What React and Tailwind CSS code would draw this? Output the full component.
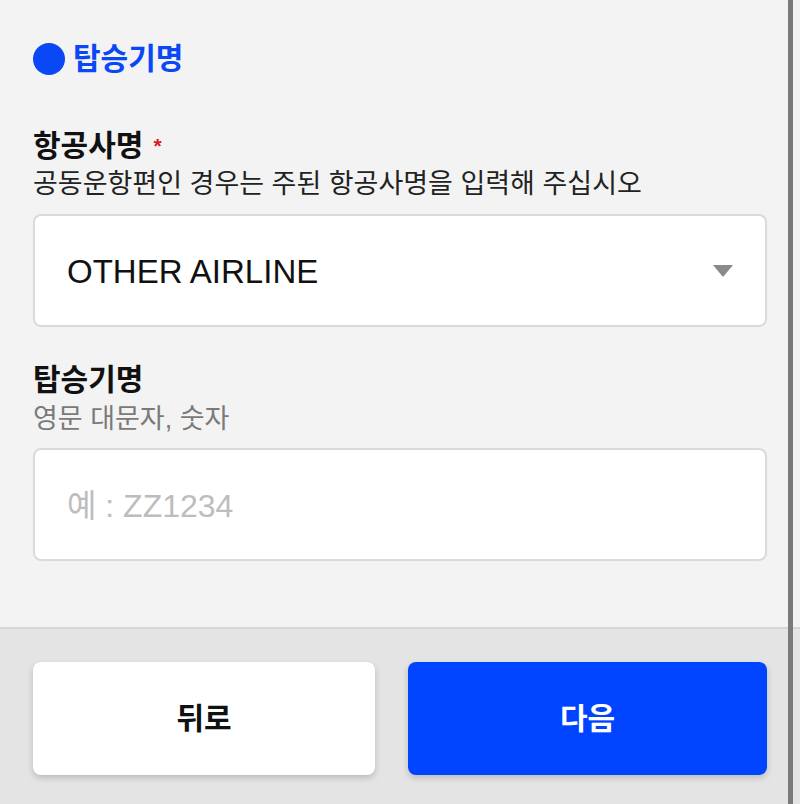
import React from "react";

const font = { fontFamily: '"Liberation Sans", "Noto Sans CJK KR", sans-serif' };

const FlightNameForm = () => {
  return (
    <div className="relative w-[800px] h-[804px] bg-[#f3f3f3] overflow-hidden flex flex-col" style={font}>
      {/* form area */}
      <div className="flex-1 pl-[33px] pr-[33px] pt-[43px]">
        <div className="flex items-center h-[32px]">
          <span className="w-[32px] h-[32px] rounded-full bg-[#0a47f5]" />
          <h1 className="ml-[8px] text-[30px] leading-[32px] font-bold text-[#0a47f5]">탑승기명</h1>
        </div>

        <div className="mt-[53px]">
          <div className="flex items-center h-[36px]">
            <span className="text-[30px] leading-[36px] font-bold text-[#111]">항공사명</span>
            <span className="ml-[10px] text-[21px] leading-[36px] font-bold text-[#d81b1b]">*</span>
          </div>
          <p className="mt-[4px] text-[27px] leading-[32px] text-[#222]">공동운항편인 경우는 주된 항공사명을 입력해 주십시오</p>
          <div className="mt-[14px] h-[113px] w-[734px] rounded-[8px] border-2 border-[#dadada] bg-white flex items-center justify-between pl-[32px] pr-[31px]">
            <span className="text-[33px] leading-[40px] pt-[2px] text-[#111]">OTHER AIRLINE</span>
            <svg width="22" height="14" viewBox="0 0 22 14">
              <path d="M1 1h20l-10 12z" fill="#8a8a8a" />
            </svg>
          </div>
        </div>

        <div className="mt-[35px]">
          <div className="h-[36px] text-[30px] leading-[36px] font-bold text-[#111]">탑승기명</div>
          <p className="mt-[5px] text-[27px] leading-[32px] text-[#7a7a7a]">영문 대문자, 숫자</p>
          <div className="mt-[13px] h-[113px] w-[734px] rounded-[8px] border-2 border-[#dadada] bg-white flex items-center pl-[32px]">
            <span className="text-[32px] leading-[40px] pt-[3px] text-[#bdbdbd]">예&nbsp;:&nbsp;ZZ1234</span>
          </div>
        </div>
      </div>

      {/* bottom buttons */}
      <div className="h-[177px] shrink-0 bg-[#e4e4e4] border-t-2 border-[#d6d6d6] pl-[33px] pr-[33px] pt-[33px] flex gap-[33px]">
        <button className="w-[342px] h-[113px] rounded-[8px] bg-white shadow-[0_3px_6px_rgba(0,0,0,0.18)] text-[30px] font-bold text-[#111]">뒤로</button>
        <button className="flex-1 h-[113px] rounded-[8px] bg-[#0044ff] shadow-[0_3px_6px_rgba(0,0,0,0.18)] text-[30px] font-bold text-white">다음</button>
      </div>

      {/* scrollbar line */}
      <div className="absolute top-0 bottom-0 left-[788px] w-[5px] bg-[#7a7a7a]" />
    </div>
  );
};

export default function App() {
  return <FlightNameForm />;
}
